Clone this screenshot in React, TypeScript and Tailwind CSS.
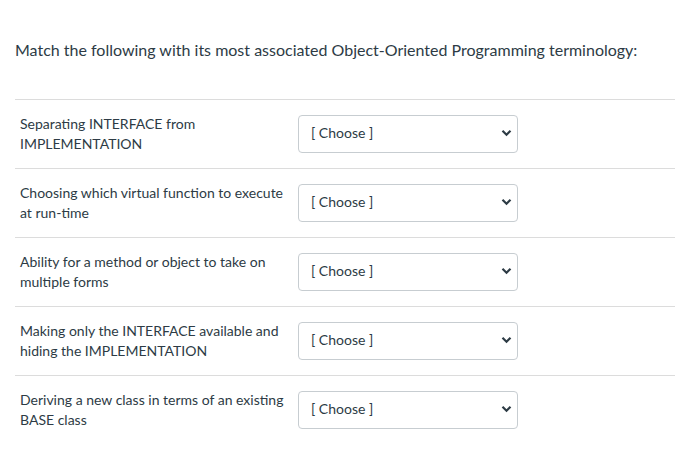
const rows = [
  ['Separating INTERFACE from', 'IMPLEMENTATION'],
  ['Choosing which virtual function to execute', 'at run-time'],
  ['Ability for a method or object to take on', 'multiple forms'],
  ['Making only the INTERFACE available and', 'hiding the IMPLEMENTATION'],
  ['Deriving a new class in terms of an existing', 'BASE class'],
];

function Chevron() {
  return (
    <svg width="11" height="8" viewBox="0 0 11 8" className="shrink-0">
      <path d="M1.5 1.8 L5.5 5.8 L9.5 1.8" fill="none" stroke="#2d3b45" strokeWidth="2.2" />
    </svg>
  );
}

export default function App() {
  return (
    <div className="min-h-screen bg-white text-[#2d3b45] font-['Lato','Liberation_Sans',sans-serif]">
      <div className="pt-[39px] pl-[15px]">
        <p className="text-[16px] leading-[22px]">
          Match the following with its most associated Object-Oriented Programming terminology:
        </p>
        <div className="mt-[38px]">
          {rows.map((r, i) => (
            <div key={i} className="flex items-center h-[69px] border-t border-[#dcdcdc] pl-[5px]">
              <div className="w-[278px] text-[14px] leading-[20px]">
                <div>{r[0]}</div>
                <div>{r[1]}</div>
              </div>
              <div className="w-[220px] h-[38px] border border-[#c7cdd1] rounded-[4px] flex items-center justify-between pl-[12px] pr-[5px] pb-[3px]">
                <span className="text-[14px]">[ Choose ]</span>
                <Chevron />
              </div>
            </div>
          ))}
        </div>
      </div>
    </div>
  );
}
